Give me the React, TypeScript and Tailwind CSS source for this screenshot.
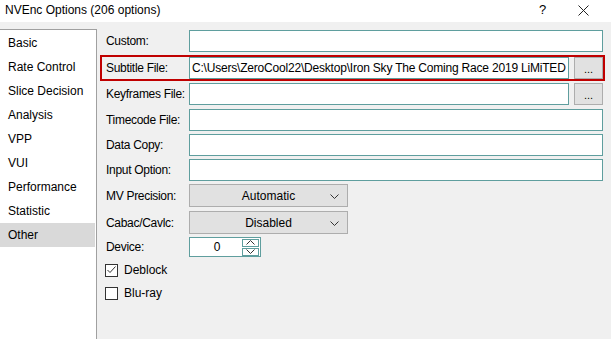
const pages = [
  "Basic",
  "Rate Control",
  "Slice Decision",
  "Analysis",
  "VPP",
  "VUI",
  "Performance",
  "Statistic",
  "Other",
]

function TextBox({ value = "", className = "" }: { value?: string; className?: string }) {
  return (
    <div
      className={`min-w-0 h-[22px] border border-[#5f9e9e] bg-white flex items-center px-[2px] overflow-hidden whitespace-nowrap tracking-[-0.2px] ${className}`}
    >
      {value}
    </div>
  )
}

function BrowseButton() {
  return (
    <div className="shrink-0 w-[29px] h-[22px] ml-[5px] border border-[#adadad] bg-[#e1e1e1] flex items-center justify-center pt-[2px] text-[11px]">
      ...
    </div>
  )
}

function Chevron({ up = false }: { up?: boolean }) {
  return (
    <svg width="9" height="5" viewBox="0 0 9 5" className="block">
      <polyline
        points={up ? "0.5,4.5 4.5,0.5 8.5,4.5" : "0.5,0.5 4.5,4.5 8.5,0.5"}
        fill="none"
        stroke="#333"
        strokeWidth="1"
      />
    </svg>
  )
}

function Combo({ value }: { value: string }) {
  return (
    <div className="relative shrink-0 w-[159px] h-[23px] border border-[#adadad] bg-[#e1e1e1] flex items-center justify-center">
      <span>{value}</span>
      <span className="absolute right-[8px] top-[9px]">
        <Chevron />
      </span>
    </div>
  )
}

function Label({ children }: { children: string }) {
  return <div className="w-[83px] shrink-0 whitespace-nowrap tracking-[-0.3px]">{children}</div>
}

function CheckBox({ checked, label, className = "" }: { checked: boolean; label: string; className?: string }) {
  return (
    <div className={`flex items-center h-[14px] ${className}`}>
      <div className="w-[13px] h-[13px] border border-[#333] bg-white flex items-center justify-center">
        {checked && (
          <svg width="9" height="8" viewBox="0 0 9 8">
            <polyline points="0.5,4 3,6.5 8.5,0.5" fill="none" stroke="#333" strokeWidth="1" />
          </svg>
        )}
      </div>
      <span className="ml-[6px]">{label}</span>
    </div>
  )
}

export default function App() {
  return (
    <div
      className="w-[611px] h-[339px] flex flex-col bg-[#f0f0f0] text-black text-[12px] overflow-hidden"
      style={{ fontFamily: '"Liberation Sans", Arial, sans-serif' }}
    >
      {/* title bar */}
      <div className="h-[22px] shrink-0 bg-white flex items-center pl-[5px] pb-[2px] text-[12px]">
        <span className="flex-1">NVEnc Options (206 options)</span>
        <span className="w-[14px] text-[13px]">?</span>
        <span className="ml-[25px] mr-[22px]">
          <svg width="11" height="11" viewBox="0 0 11 11" className="block">
            <path d="M0.5 0.5 L10.5 10.5 M10.5 0.5 L0.5 10.5" stroke="#222" strokeWidth="1" />
          </svg>
        </span>
      </div>

      <div className="flex-1 flex">
        {/* page list */}
        <div className="w-[97px] shrink-0 mt-[7px] bg-white border-t border-r border-[#a0a0a0] pt-[1px]">
          {pages.map((p) => (
            <div
              key={p}
              className={`h-[24px] flex items-center pl-[8px] mr-[1px] whitespace-nowrap ${p === "Other" ? "bg-[#d9d9d9]" : ""}`}
            >
              {p}
            </div>
          ))}
        </div>

        {/* options */}
        <div className="flex-1 min-w-0 flex flex-col pl-[9px] pr-[8px] pt-[8px]">
          <div className="flex items-center">
            <Label>Custom:</Label>
            <TextBox className="flex-1" />
          </div>

          <div className="flex items-center mt-[5px] -ml-[4px] pl-[4px] outline-2 outline-[#c00000] outline-offset-0">
            <Label>Subtitle File:</Label>
            <TextBox className="flex-1" value="C:\Users\ZeroCool22\Desktop\Iron Sky The Coming Race 2019 LiMiTED" />
            <BrowseButton />
          </div>

          <div className="flex items-center mt-[4px]">
            <Label>Keyframes File:</Label>
            <TextBox className="flex-1" />
            <BrowseButton />
          </div>

          <div className="flex items-center mt-[4px]">
            <Label>Timecode File:</Label>
            <TextBox className="flex-1" />
          </div>

          <div className="flex items-center mt-[3px]">
            <Label>Data Copy:</Label>
            <TextBox className="flex-1" />
          </div>

          <div className="flex items-center mt-[3px]">
            <Label>Input Option:</Label>
            <TextBox className="flex-1" />
          </div>

          <div className="flex items-center mt-[3px]">
            <Label>MV Precision:</Label>
            <Combo value="Automatic" />
          </div>

          <div className="flex items-center mt-[4px]">
            <Label>Cabac/Cavlc:</Label>
            <Combo value="Disabled" />
          </div>

          <div className="flex items-center mt-[3px]">
            <Label>Device:</Label>
            <div className="shrink-0 w-[72px] h-[20px] border border-[#5f9e9e] bg-white flex items-center">
              <span className="flex-1 text-center pl-[2px]">0</span>
              <div className="w-[18px] h-full flex flex-col justify-center gap-[1px] pr-[1px]">
                <div className="h-[8px] border border-[#5f9e9e] flex items-center justify-center">
                  <Chevron up />
                </div>
                <div className="h-[8px] border border-[#5f9e9e] flex items-center justify-center">
                  <Chevron />
                </div>
              </div>
            </div>
          </div>

          <CheckBox checked label="Deblock" className="mt-[6px] -ml-[1px]" />
          <CheckBox checked={false} label="Blu-ray" className="mt-[9px] -ml-[1px]" />
        </div>
      </div>
    </div>
  )
}
